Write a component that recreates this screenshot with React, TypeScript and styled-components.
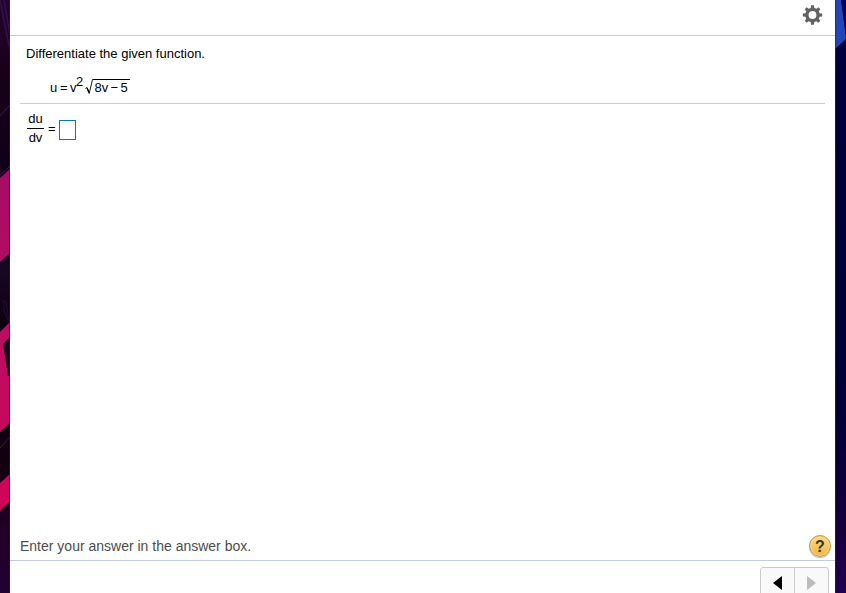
import React from "react";
import styled, { createGlobalStyle } from "styled-components";

const GlobalStyle = createGlobalStyle`
  * { box-sizing: border-box; }
  html, body { margin: 0; padding: 0; overflow: hidden; }
  body { font-family: "Liberation Sans", Arial, sans-serif; background: #fff; color: #000; }
`;

const Screen = styled.div`
  display: grid;
  grid-template-columns: 10px 825px 11px;
  width: 846px;
  height: 593px;
  overflow: hidden;
`;

const Wallpaper = styled.svg`
  display: block;
  width: 100%;
  height: 593px;
`;

const Panel = styled.main`
  display: flex;
  flex-direction: column;
  height: 593px;
  background: #fff;
`;

const Toolbar = styled.header`
  display: flex;
  justify-content: flex-end;
  flex: none;
  height: 36px;
  padding: 5px 12px 0 0;
  border-bottom: 1px solid #c9cad6;
`;

const IconButton = styled.button`
  display: block;
  width: 21px;
  height: 20px;
  padding: 0;
  border: 0;
  background: none;
  svg { display: block; }
`;

const Question = styled.section`
  flex: none;
  height: 68px;
  margin: 0 10px;
  padding: 10px 0 0 6px;
  border-bottom: 1px solid #cccdd6;
`;

const Prompt = styled.p`
  margin: 0;
  font-size: 13px;
  line-height: 15px;
  white-space: nowrap;
`;

const Formula = styled.div`
  display: flex;
  height: 19px;
  margin: 16px 0 0 24px;
  font-size: 13px;
  line-height: 15px;
`;

const Term = styled.span<{ $width: number; $top?: number }>`
  flex: none;
  width: ${(p) => p.$width}px;
  margin-top: ${(p) => p.$top ?? 3}px;
  white-space: nowrap;
`;

const RootSign = styled.svg`
  flex: none;
  display: block;
  width: 8px;
  height: 18px;
`;

const Radicand = styled.span`
  width: 37px;
  height: 16px;
  margin-top: 2px;
  padding-left: 1.6px;
  border-top: 1px solid #000;
  display: flex;
`;

const Answer = styled.section`
  display: flex;
  flex: 1;
  padding: 7px 0 0 17px;
  font-size: 13px;
  line-height: 15px;
`;

const Fraction = styled.div`
  width: 17px;
  text-align: center;
`;

const Numerator = styled.div`
  height: 18px;
  border-bottom: 1px solid #000;
`;

const Denominator = styled.div`
  padding-top: 1px;
`;

const EqualSign = styled.span`
  width: 15px;
  padding: 10px 0 0 4px;
`;

const AnswerBox = styled.input`
  display: block;
  width: 17px;
  height: 20px;
  margin: 9px 0 0;
  padding: 0;
  border: 1px solid #087c9c;
  border-radius: 0;
  outline: 0;
  background: #fff;
`;

const HintBar = styled.div`
  display: flex;
  justify-content: space-between;
  flex: none;
  height: 28px;
  padding: 0 4px 0 10px;
  border-bottom: 1px solid #c5cbda;
`;

const Hint = styled.span`
  padding-top: 5px;
  font-size: 14px;
  line-height: 16px;
  color: #4c4c4c;
  white-space: nowrap;
`;

const HelpButton = styled.button`
  display: flex;
  align-items: center;
  justify-content: center;
  width: 22px;
  height: 22px;
  margin-top: 2px;
  padding: 1px 0 0;
  border: 1px solid #b99655;
  border-radius: 50%;
  background: linear-gradient(#fbdc80, #f4b544);
  box-shadow: inset 0 0 0 1px #f9d884, 0 1px 1px #bbb;
  font: bold 16px/19px "Liberation Sans", Arial, sans-serif;
  color: #303030;
`;

const Footer = styled.footer`
  display: flex;
  justify-content: flex-end;
  flex: none;
  height: 32px;
  padding: 6px 6px 0 0;
  overflow: hidden;
`;

const Pager = styled.div`
  display: flex;
  width: 69px;
  height: 32px;
  border: 1px solid #cacaca;
  border-radius: 3px;
  background: #f9f9f9;
`;

const PageButton = styled.button<{ $disabled?: boolean }>`
  flex: none;
  width: ${(p) => (p.$disabled ? 34 : 33)}px;
  padding: 0;
  border: 0;
  border-left: ${(p) => (p.$disabled ? "1px solid #cacaca" : "0")};
  background: none;
  color: ${(p) => (p.$disabled ? "#bcbcbc" : "#000")};
  svg { display: block; }
`;

function LeftWallpaper() {
  return (
    <Wallpaper viewBox="0 0 10 593" preserveAspectRatio="none">
      <defs>
        <linearGradient id="night" x1="0" y1="0" x2="0" y2="1">
          <stop offset="0" stopColor="#250331" />
          <stop offset=".13" stopColor="#180019" />
          <stop offset=".3" stopColor="#10001a" />
          <stop offset=".46" stopColor="#160724" />
          <stop offset=".55" stopColor="#0e0010" />
          <stop offset=".78" stopColor="#12000f" />
          <stop offset=".9" stopColor="#220029" />
          <stop offset="1" stopColor="#220031" />
        </linearGradient>
        <linearGradient id="pink" gradientUnits="userSpaceOnUse" x1="0" y1="170" x2="0" y2="510">
          <stop offset="0" stopColor="#a50c68" />
          <stop offset=".5" stopColor="#bd0c61" />
          <stop offset="1" stopColor="#d00459" />
        </linearGradient>
      </defs>
      <rect width="10" height="593" fill="url(#night)" />
      <path d="M0 0L10 50M4 0L10 35" stroke="#35104a" strokeWidth="1.5" fill="none" />
      <path d="M0 116L10 105M0 175L10 166M0 448L10 437" stroke="#48145b" fill="none" />
      <path d="M0 178L10 169V253L0 262Z" fill="url(#pink)" />
      <path d="M2 301H6L9 322M4 301V310L8 321" stroke="#270933" fill="none" />
      <path d="M0 332L10 322V423L0 432Z" fill="url(#pink)" />
      <path d="M3 344L10 337V376H8Z" fill="#18051c" />
      <path d="M0 483L10 474V501L0 511Z" fill="url(#pink)" />
      <path d="M9.5 0V593" stroke="#301531" strokeOpacity=".65" />
    </Wallpaper>
  );
}

function RightWallpaper() {
  return (
    <Wallpaper viewBox="0 0 11 593" preserveAspectRatio="none">
      <defs>
        <linearGradient id="blue" x1="0" y1="0" x2="0" y2="1">
          <stop offset="0" stopColor="#00003e" />
          <stop offset=".5" stopColor="#000035" />
          <stop offset=".74" stopColor="#050036" />
          <stop offset=".9" stopColor="#16003c" />
          <stop offset="1" stopColor="#200050" />
        </linearGradient>
      </defs>
      <rect width="11" height="593" fill="url(#blue)" />
      <path d="M0 0H6L11 36V39L0 49Z" fill="#2445b5" />
      <path d="M6 0H11V36Z" fill="#03005a" />
      <path d="M.5 0V593" stroke="#282844" strokeOpacity=".7" />
    </Wallpaper>
  );
}

const teeth = [0, 45, 90, 135, 180, 225, 270, 315];

function Gear() {
  return (
    <svg width="21" height="20" viewBox="0 0 21 20" fill="#626262">
      <circle cx="10.5" cy="10" r="5.6" fill="none" stroke="#626262" strokeWidth="3.4" />
      {teeth.map((a) => (
        <path key={a} d="M8.7 3.6L9.1 .3H11.9L12.3 3.6Z" transform={`rotate(${a} 10.5 10)`} />
      ))}
    </svg>
  );
}

export default function App() {
  return (
    <>
      <GlobalStyle />
      <Screen>
        <LeftWallpaper />
        <Panel>
          <Toolbar>
            <IconButton aria-label="Settings"><Gear /></IconButton>
          </Toolbar>
          <Question>
            <Prompt>Differentiate the given function.</Prompt>
            <Formula>
              <Term $width={10}>u</Term>
              <Term $width={10}>=</Term>
              <Term $width={6}>v</Term>
              <Term $width={9} $top={-3}>2</Term>
              <RootSign viewBox="0 0 8 18">
                <path d="M.5 11.5L2 10.5L4.2 16.5L7.5 2.5H8" fill="none" stroke="#000" strokeWidth=".9" />
                <path d="M2.1 11L4 15.5" stroke="#000" strokeWidth="1.2" />
              </RootSign>
              <Radicand>
                <Term $width={16} $top={0}>8v</Term>
                <Term $width={10} $top={0}>−</Term>
                <Term $width={8} $top={0}>5</Term>
              </Radicand>
            </Formula>
          </Question>
          <Answer>
            <Fraction>
              <Numerator>du</Numerator>
              <Denominator>dv</Denominator>
            </Fraction>
            <EqualSign>=</EqualSign>
            <AnswerBox aria-label="Answer" />
          </Answer>
          <HintBar>
            <Hint>Enter your answer in the answer box.</Hint>
            <HelpButton aria-label="Help">?</HelpButton>
          </HintBar>
          <Footer>
            <Pager>
              <PageButton aria-label="Previous">
                <svg width="33" height="30" viewBox="0 0 33 30"><path d="M12 15L21 8V22Z" fill="currentColor" /></svg>
              </PageButton>
              <PageButton $disabled aria-label="Next">
                <svg width="32" height="30" viewBox="0 0 32 30"><path d="M21 15L12 8V22Z" fill="currentColor" /></svg>
              </PageButton>
            </Pager>
          </Footer>
        </Panel>
        <RightWallpaper />
      </Screen>
    </>
  );
}
